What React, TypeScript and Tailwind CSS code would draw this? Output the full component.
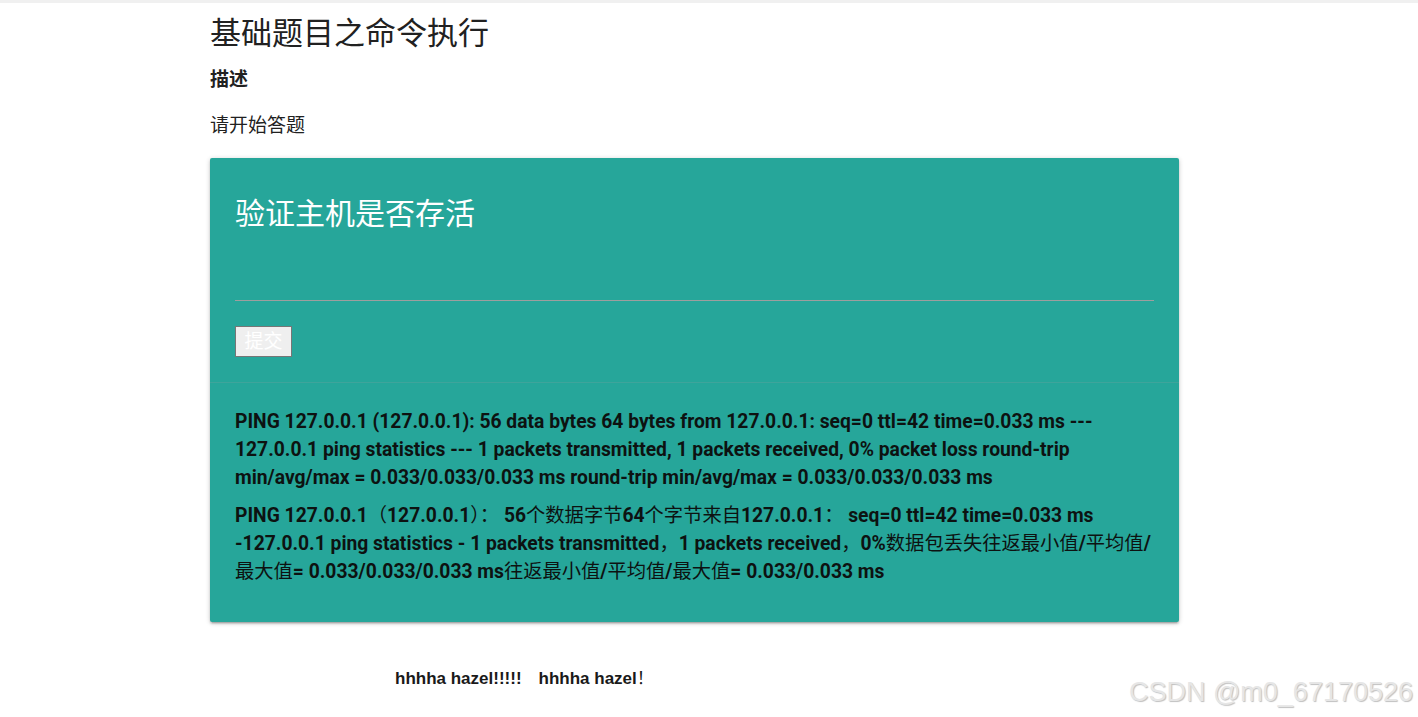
import React from "react";

const N = ({ children }: { children: React.ReactNode }) => (
  <span className="font-normal">{children}</span>
);

export default function App() {
  return (
    <div
      className="relative min-h-[717px] bg-white text-[#212121]"
      style={{ fontFamily: 'Roboto, "Noto Sans CJK SC", sans-serif' }}
    >
      <div className="h-[3px] bg-[#f0f0f0]" />
      <div className="ml-[210px] w-[969px]">
        <h1 className="mt-[13px] text-[31px] leading-[36px] font-normal">基础题目之命令执行</h1>
        <h4 className="mt-[16px] text-[19px] leading-[24px] font-bold">描述</h4>
        <p className="mt-[22px] text-[19px] leading-[24px]">请开始答题</p>

        <div className="mt-[20px] rounded-[2px] bg-[#26a69a] shadow-[0_2px_2px_0_rgba(0,0,0,0.14),0_3px_1px_-2px_rgba(0,0,0,0.12),0_1px_5px_0_rgba(0,0,0,0.2)]">
          <div className="px-[25px] pt-[38px] pb-[25px]">
            <div className="text-[30px] leading-[36px] text-white">验证主机是否存活</div>
            <div className="h-[69px] border-b border-[#9e9e9e]" />
            <button className="mt-[25px] flex h-[31px] w-[57px] items-center justify-center border border-[#767676] bg-[#efefef] text-[19px] leading-none text-white">
              提交
            </button>
          </div>
          <div className="border-t border-[rgba(160,160,160,0.2)] px-[25px] pt-[25px] pb-[36px] text-[19.3px] leading-[28px] font-bold text-[#0d1211]">
            <p>
              PING 127.0.0.1 (127.0.0.1): 56 data bytes 64 bytes from 127.0.0.1: seq=0 ttl=42 time=0.033 ms --- 127.0.0.1 ping statistics --- 1 packets transmitted, 1 packets received, 0% packet loss round-trip min/avg/max = 0.033/0.033/0.033 ms round-trip min/avg/max = 0.033/0.033/0.033 ms
            </p>
            <p className="mt-[10px]">
              PING 127.0.0.1<N>（</N>127.0.0.1<N>）：</N> 56<N>个数据字节</N>64<N>个字节来自</N>127.0.0.1<N>：</N> seq=0 ttl=42 time=0.033 ms -127.0.0.1 ping statistics - 1 packets transmitted<N>，</N>1 packets received<N>，</N>0%<N>数据包丢失往返最小值</N>/<N>平均值</N>/<N>最大值</N>= 0.033/0.033/0.033 ms<N>往返最小值</N>/<N>平均值</N>/<N>最大值</N>= 0.033/0.033 ms
            </p>
          </div>
        </div>

        <div
          className="mt-[47px] pl-[185px] text-[17px] leading-[20px] font-bold text-[#1a1a1a]"
          style={{ fontFamily: '"Liberation Sans", Arial, "Noto Sans CJK SC", sans-serif' }}
        >
          <span>hhhha hazel!!!!!</span>
          <span className="ml-[17px]">hhhha hazel<span className="font-normal">！</span></span>
        </div>
      </div>

      <div
        className="absolute right-[5px] bottom-[10px] text-[27px] leading-[30px] text-[#e6e6e6] [text-shadow:1px_1px_1px_rgba(0,0,0,0.25)]"
        style={{ fontFamily: '"Liberation Sans", Arial, sans-serif' }}
      >
        CSDN @m0_67170526
      </div>
    </div>
  );
}
